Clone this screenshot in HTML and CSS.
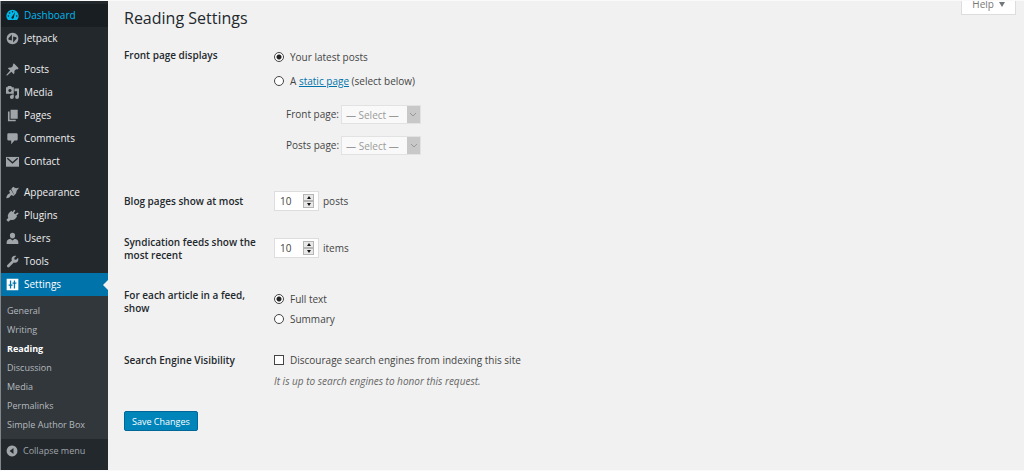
FILE: index.html
```html
<!DOCTYPE html>
<html lang="en">
<head>
  <meta charset="UTF-8">
  <meta name="viewport" content="width=device-width, initial-scale=1.0">
  <title>Reading Settings</title>
  <link rel="stylesheet" href="styles.css">
</head>
<body>

<nav class="admin-menu" aria-label="Main menu">
  <ul class="menu">
    <li><a class="menu-item highlighted" href="#">
      <svg viewBox="0 0 20 20"><path fill-rule="evenodd" d="M3 17A9.500 9.500 0 1 1 17 17ZM10 3a1.100 1.100 0 1 0 .1 0ZM5.500 5a1.100 1.100 0 1 0 .1 0ZM3.600 9.500a1.100 1.100 0 1 0 .1 0ZM16.400 9.500a1.100 1.100 0 1 0 .1 0ZM14 4.500l-4.500 7a1.800 1.800 0 1 0 2.500 1.500Z"/></svg>
      Dashboard</a></li>
    <li><a class="menu-item" href="#">
      <svg viewBox="0 0 20 20"><path fill-rule="evenodd" d="M10 1a9 9 0 1 0 .1 0ZM9 4v9l-4.500-1.200c-1-.3-1-1.300-.6-2ZM11 16V7l4.500 1.200c1 .3 1 1.300.6 2Z"/></svg>
      Jetpack</a></li>
    <li class="separator"></li>
    <li><a class="menu-item" href="#">
      <svg viewBox="0 0 20 20"><path d="M10.400 3 12 .5l7.500 7.500-2 2-2-.3-2.700 2.700c.5 1.600.2 3.500-.8 4.800l-3.700-3.700L1.500 19.500l-1-1 5.900-6.800-3.700-3.700c1.300-1 3.200-1.300 4.800-.8l3.200-2.700Z"/></svg>
      Posts</a></li>
    <li><a class="menu-item" href="#">
      <svg viewBox="0 0 20 20"><path fill-rule="evenodd" d="M0 2h2l1-2h5l1 2h3v10H0ZM6 4.500a2.500 2.500 0 1 0 .1 0ZM13 4h7v13a3 3 0 1 1-3-3V8h-4ZM9 13h3v4a3 3 0 1 1-3-3Z"/></svg>
      Media</a></li>
    <li><a class="menu-item" href="#">
      <svg viewBox="0 0 20 20"><path d="M7 1h11v14H7ZM3 4h2.500v12.500H15V19H3Z"/></svg>
      Pages</a></li>
    <li><a class="menu-item" href="#">
      <svg viewBox="0 0 20 20"><path d="M4 2h12q2 0 2 2v7q0 2-2 2h-3l-5 6v-6H4q-2 0-2-2V4q0-2 2-2Z"/></svg>
      Comments</a></li>
    <li><a class="menu-item" href="#">
      <svg viewBox="0 0 20 20"><path d="M0 3h20v15H0Z"/><path class="flap" d="M2 5l8 7 8-7"/></svg>
      Contact</a></li>
    <li class="separator"></li>
    <li><a class="menu-item" href="#">
      <svg viewBox="0 0 20 20"><path d="M8 4.500 11 1l2.500 1.500 2 .8 4.500-.5-3.500 4.500-1 4-2.500 3ZM7.200 5.200l5.600 9-1.500 1.300-2.800-1.500-1.500 1c-1 2-3 3.500-6 4L.5 17.500c1-3.500 2.500-5 5-6l.5-1.500-1.300-2.500Z"/></svg>
      Appearance</a></li>
    <li><a class="menu-item" href="#">
      <svg viewBox="0 0 20 20"><path d="M12.500 1l2 1.500L12 6l2 2.200 3.500-3L19.500 7l-3.500 3 1 1c-2 4.500-5.500 7-9.500 5.500L3.500 19.500l-3-2.500 3-3.500C1.500 9.500 4.500 5 8.500 3l1.700 1.700Z"/></svg>
      Plugins</a></li>
    <li><a class="menu-item" href="#">
      <svg viewBox="0 0 20 20"><path d="M10 1c2.500 0 4 1.700 4 4.200S12.300 10 10 10 6 7.700 6 5.200 7.500 1 10 1ZM6.500 10.500 10 13l3.500-2.500c3.500.5 5.500 2.500 5.500 5.500v2.500H1V16c0-3 2-5 5.500-5.500Z"/></svg>
      Users</a></li>
    <li><a class="menu-item" href="#">
      <svg viewBox="0 0 20 20"><path d="M17.700 10.300c-1.500 1.500-3.700 1.900-5.600 1.200l-7 7c-.9.900-2.200.8-3 0-.9-.9-.8-2.200 0-3l7-7C8.100 6.300 8.500 4.100 10 2.600c1.600-1.500 3.900-1.900 5.800-1.100l-3.100 3.100.3 2.500 2.500.3 3.100-3c.7 1.800.7 4.400-.9 5.900Z"/></svg>
      Tools</a></li>
    <li><a class="menu-item current" href="#">
      <svg viewBox="0 0 20 20"><path fill-rule="evenodd" d="M1 1h18v18H1ZM6 4v6H4v2h2v4h2v-4h2v-2H8V4ZM12 4v3h-2v2h2v7h2V9h2V7h-2V4Z"/></svg>
      Settings</a>
      <ul class="submenu">
        <li><a href="#">General</a></li>
        <li><a href="#">Writing</a></li>
        <li><a class="active" href="#">Reading</a></li>
        <li><a href="#">Discussion</a></li>
        <li><a href="#">Media</a></li>
        <li><a href="#">Permalinks</a></li>
        <li><a href="#">Simple Author Box</a></li>
      </ul>
    </li>
  </ul>
  <button type="button" class="collapse">
    <svg viewBox="0 0 20 20"><path fill-rule="evenodd" d="M10 1a9 9 0 1 0 .1 0ZM12.500 5v10L6 10Z"/></svg>
    Collapse menu
  </button>
</nav>

<main class="content">
  <div class="top-bar">
    <h1>Reading Settings</h1>
    <button type="button" class="help">Help <span class="triangle"></span></button>
  </div>

  <form class="settings">
    <div class="row front-row" role="group" aria-labelledby="frontLabel">
      <div class="title" id="frontLabel">Front page displays</div>
      <div class="field">
        <div class="choice"><input type="radio" name="front" id="latest" checked><label for="latest">Your latest posts</label></div>
        <div class="choice"><input type="radio" name="front" id="static"><label for="static">A <a href="#">static page</a> (select below)</label></div>
        <div class="page-select">
          <label for="frontPage">Front page:</label>
          <div class="select-box">
            <select id="frontPage" disabled><option>— Select —</option></select>
            <span class="arrow"><svg viewBox="0 0 8 6"><path d="M1 1l3 3 3-3"/></svg></span>
          </div>
        </div>
        <div class="page-select">
          <label for="postsPage">Posts page:</label>
          <div class="select-box">
            <select id="postsPage" disabled><option>— Select —</option></select>
            <span class="arrow"><svg viewBox="0 0 8 6"><path d="M1 1l3 3 3-3"/></svg></span>
          </div>
        </div>
      </div>
    </div>

    <div class="row blog-row">
      <label class="title" for="blogPosts">Blog pages show at most</label>
      <div class="field amount">
        <div class="number-box">
          <input type="number" id="blogPosts" value="10" min="1">
          <div class="spinner">
            <button type="button" aria-label="More posts"><span class="up"></span></button>
            <button type="button" aria-label="Fewer posts"><span class="down"></span></button>
          </div>
        </div>
        posts
      </div>
    </div>

    <div class="row feed-row">
      <label class="title" for="feedItems">Syndication feeds show the most recent</label>
      <div class="field amount">
        <div class="number-box">
          <input type="number" id="feedItems" value="10" min="1">
          <div class="spinner">
            <button type="button" aria-label="More items"><span class="up"></span></button>
            <button type="button" aria-label="Fewer items"><span class="down"></span></button>
          </div>
        </div>
        items
      </div>
    </div>

    <div class="row article-row" role="group" aria-labelledby="articleLabel">
      <div class="title" id="articleLabel">For each article in a feed, show</div>
      <div class="field">
        <div class="choice"><input type="radio" name="article" id="full" checked><label for="full">Full text</label></div>
        <div class="choice"><input type="radio" name="article" id="summary"><label for="summary">Summary</label></div>
      </div>
    </div>

    <div class="row search-row" role="group" aria-labelledby="searchLabel">
      <div class="title" id="searchLabel">Search Engine Visibility</div>
      <div class="field">
        <div class="choice"><input type="checkbox" id="discourage"><label for="discourage">Discourage search engines from indexing this site</label></div>
        <p class="note">It is up to search engines to honor this request.</p>
      </div>
    </div>

    <button type="submit" class="save">Save Changes</button>
  </form>
</main>

</body>
</html>
```
FILE: styles.css
```css
* {
  box-sizing: border-box;
}

body {
  display: flex;
  min-height: 100vh;
  margin: 0;
  border-top: 1px solid #fafafa;
  border-bottom: 1px solid #fafafa;
  background-color: #f1f1f1;
  color: #444;
  font-family: "Open Sans", sans-serif;
  font-size: 10px;
  line-height: 13px;
}

ul {
  list-style: none;
  margin: 0;
  padding: 0;
}

button, input, select {
  font-family: inherit;
  font-size: inherit;
  color: inherit;
  margin: 0;
}

/* Side menu */
.admin-menu {
  flex: 0 0 108px;
  padding-top: 3px;
  border-left: 1px solid #80868b;
  background-color: #23282d;
}

.menu-item {
  display: flex;
  align-items: center;
  gap: 5px;
  height: 23px;
  padding-left: 5px;
  color: #eee;
  text-decoration: none;
}

.menu-item svg {
  width: 13px;
  height: 13px;
  fill: #a0a5aa;
}

.menu-item .flap {
  fill: none;
  stroke: #23282d;
  stroke-width: 2;
}

.menu-item.highlighted {
  background-color: #191e23;
  color: #00b9eb;
}

.menu-item.highlighted svg {
  fill: #00b9eb;
}

.separator {
  height: 8px;
}

.menu-item.current {
  background-color: #0073aa;
  color: #fff;
}

.menu-item.current svg {
  fill: #fff;
}

.menu-item.current::after {
  content: "";
  margin-left: auto;
  border: 5px solid transparent;
  border-right-color: #f1f1f1;
  border-left: none;
}

.submenu {
  padding: 5px 0;
  background-color: #32373c;
}

.submenu a {
  display: block;
  padding-left: 6px;
  color: #b4b9be;
  font-size: 9px;
  line-height: 19px;
  text-decoration: none;
  white-space: nowrap;
}

.submenu .active {
  color: #fff;
  font-weight: 700;
}

.collapse {
  display: flex;
  align-items: center;
  gap: 5px;
  height: 23px;
  padding: 0 0 0 5px;
  border: none;
  background: none;
  color: #a0a5aa;
  font-size: 9px;
  white-space: nowrap;
}

.collapse svg {
  width: 12px;
  height: 12px;
  fill: #a0a5aa;
}

/* Content */
.content {
  flex: 1;
  padding-left: 16px;
}

.top-bar {
  display: flex;
  justify-content: space-between;
  align-items: flex-start;
  padding-right: 8px;
}

h1 {
  margin: 5px 0 0;
  color: #23282d;
  font-size: 16px;
  font-weight: 400;
  line-height: 24px;
}

.help {
  display: flex;
  align-items: center;
  gap: 5px;
  height: 14px;
  padding: 0 10px 6px;
  border: 1px solid #ddd;
  border-top: none;
  background-color: #fff;
  color: #777;
  line-height: 7px;
}

.triangle {
  border: 3px solid transparent;
  border-top: 5px solid #72777c;
  border-bottom: none;
}

.row {
  display: flex;
}

.title {
  flex: 0 0 150px;
  padding-right: 15px;
  color: #23282d;
  font-weight: 600;
}

.front-row {
  height: 149px;
  padding-top: 19px;
}

.blog-row {
  height: 41px;
  padding-top: 16px;
}

.feed-row {
  height: 53px;
  padding-top: 16px;
}

.article-row {
  height: 65px;
  padding-top: 16px;
}

.search-row {
  height: 73px;
  padding-top: 16px;
}

.choice {
  display: flex;
  align-items: center;
  gap: 6px;
  height: 20px;
}

.field {
  margin-top: -4px;
}

.article-row .field {
  margin-top: 0;
}

.front-row .choice {
  height: 24px;
}

.choice a {
  color: #0073aa;
}

input[type="radio"], input[type="checkbox"] {
  appearance: none;
  width: 10px;
  height: 10px;
  border: 1px solid #444;
  background-color: #fff;
}

input[type="radio"] {
  border-radius: 50%;
}

input[type="radio"]:checked {
  background: radial-gradient(circle, #222 0 2px, #fff 3px);
}

.page-select {
  display: flex;
  align-items: center;
  gap: 2px;
  margin: 12px 0 0 12px;
}

.select-box {
  display: flex;
  width: 80px;
  height: 19px;
  border: 1px solid #e2e2e2;
  background-color: #f9f9f9;
}

.select-box select {
  appearance: none;
  flex: 1;
  min-width: 0;
  padding: 0 0 0 4px;
  border: none;
  background: none;
  color: #999;
  opacity: 1;
}

.arrow {
  display: flex;
  align-items: center;
  justify-content: center;
  width: 13px;
  background-color: #c8c8c8;
}

.arrow svg {
  width: 8px;
  height: 6px;
  fill: none;
  stroke: #999;
}

.amount {
  display: flex;
  align-items: center;
  align-self: flex-start;
  gap: 4px;
}

.feed-row .amount {
  margin-top: 2px;
}

.number-box {
  display: flex;
  align-items: center;
  width: 45px;
  height: 20px;
  padding-right: 4px;
  border: 1px solid #ddd;
  background-color: #fff;
}

.number-box input {
  appearance: textfield;
  flex: 1;
  min-width: 0;
  padding: 0 0 0 5px;
  border: none;
  background: none;
}

.number-box input::-webkit-inner-spin-button {
  appearance: none;
}

.spinner {
  display: flex;
  flex-direction: column;
  width: 11px;
  height: 14px;
}

.spinner button {
  display: flex;
  flex: 1;
  align-items: center;
  justify-content: center;
  padding: 0;
  border: 1px solid #b5b5b5;
  background-color: #e8e8e8;
}

.up, .down {
  border: 2px solid transparent;
}

.up {
  border-top: none;
  border-bottom: 3px solid #111;
}

.down {
  border-bottom: none;
  border-top: 3px solid #111;
}

.note {
  margin: 5px 0 0;
  color: #666;
  font-style: italic;
}

.save {
  height: 20px;
  padding: 0 7px;
  border: 1px solid #006799;
  border-radius: 2px;
  background-color: #0085ba;
  color: #fff;
  font-size: 9px;
}
```
